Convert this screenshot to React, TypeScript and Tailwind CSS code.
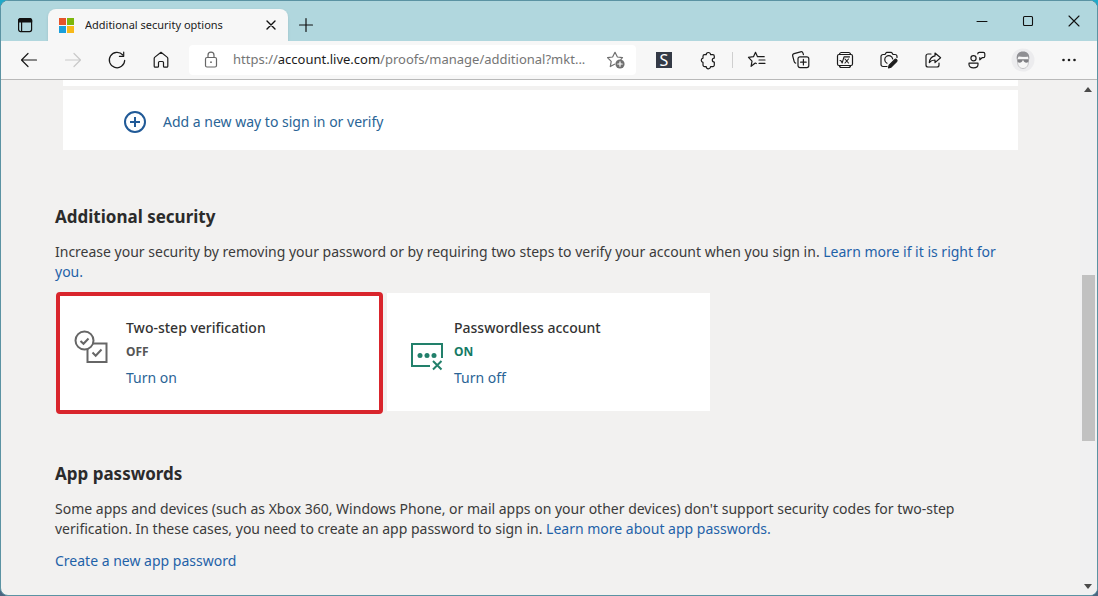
import type { ReactNode } from "react";

type IconButtonProps = { label: string; children: ReactNode; className?: string; disabled?: boolean };

function IconButton({ label, children, className = "text-[#1b1b1b]", disabled }: IconButtonProps) {
  return (
    <button
      type="button"
      aria-label={label}
      disabled={disabled}
      className={`flex h-[30px] w-11 shrink-0 items-center justify-center ${className}`}
    >
      {children}
    </button>
  );
}

function Icon({ children, size = 20, stroke = 1.2 }: { children: ReactNode; size?: number; stroke?: number }) {
  return (
    <svg
      width={size}
      height={size}
      viewBox={`0 0 ${size} ${size}`}
      fill="none"
      stroke="currentColor"
      strokeWidth={stroke}
      strokeLinecap="round"
      strokeLinejoin="round"
      aria-hidden="true"
      className="shrink-0"
    >
      {children}
    </svg>
  );
}

function TitleBar() {
  return (
    <header className="flex h-10 shrink-0 items-stretch bg-[#b1d7de]">
      <button type="button" aria-label="Tab actions menu" className="flex w-[47px] shrink-0 items-center justify-center pt-2 text-[#111]">
        <Icon size={16}>
          <rect x="1.6" y="1.6" width="13" height="13" rx="2" />
          <path d="M1.6 5V3.6a2 2 0 0 1 2-2h9a2 2 0 0 1 2 2V5z" fill="currentColor" />
          <path d="M4.6 5v9.5" stroke="currentColor" />
        </Icon>
      </button>
      <div className="mt-2 flex w-60 items-center rounded-t-lg bg-[#f7f7f7] pr-2 pl-[11px] shadow-sm">
        <svg width="15" height="15" viewBox="0 0 15 15" aria-hidden="true" className="shrink-0">
          <path d="M0 0h7v7H0z" fill="#e5532a" />
          <path d="M8 0h7v7H8z" fill="#7db70c" />
          <path d="M0 8h7v7H0z" fill="#1a9fdb" />
          <path d="M8 8h7v7H8z" fill="#f8b91a" />
        </svg>
        <span className="ml-[11px] flex-1 truncate text-[11px] text-[#222]">Additional security options</span>
        <button type="button" aria-label="Close tab" className="flex size-[18px] items-center justify-center text-[#111]">
          <Icon size={10} stroke={1.4}>
            <path d="M1 1l8 8M9 1L1 9" />
          </Icon>
        </button>
      </div>
      <button type="button" aria-label="New tab" className="flex w-9 shrink-0 items-center justify-center pt-2 text-[#111]">
        <Icon size={16}>
          <path d="M8 1.5v13M1.5 8h13" />
        </Icon>
      </button>
      <div className="ml-auto flex text-[#111]">
        <button type="button" aria-label="Minimize" className="flex w-[46px] items-center justify-center">
          <Icon size={12}>
            <path d="M1 6.5h10" strokeWidth="1" />
          </Icon>
        </button>
        <button type="button" aria-label="Maximize" className="flex w-[46px] items-center justify-center">
          <Icon size={12}>
            <rect x="1.5" y="1.5" width="9" height="9" rx="1" strokeWidth="1.1" />
          </Icon>
        </button>
        <button type="button" aria-label="Close" className="flex w-[46px] items-center justify-center">
          <Icon size={12}>
            <path d="M1 1l10 10M11 1L1 11" strokeWidth="1.1" />
          </Icon>
        </button>
      </div>
    </header>
  );
}

function Toolbar() {
  return (
    <nav aria-label="Browser" className="flex h-[39px] shrink-0 items-center border-b border-[#b9b9b9] bg-[#f7f7f7] px-[6px]">
      <IconButton label="Back">
        <Icon>
          <path d="M17.500 10H2.500M9 3.500L2.500 10L9 16.500" />
        </Icon>
      </IconButton>
      <IconButton label="Forward" disabled className="text-[#c9c9c9]">
        <Icon>
          <path d="M2.500 10h15M11 3.500L17.500 10L11 16.500" />
        </Icon>
      </IconButton>
      <IconButton label="Refresh">
        <Icon>
          <path d="M17.700 10.300A7.700 7.700 0 1 1 15.800 5" />
          <path d="M16.700 2v4.300h-4.300" />
        </Icon>
      </IconButton>
      <IconButton label="Home">
        <Icon>
          <path d="M3.200 8.600a2 2 0 0 1 .7-1.500L10 2.300l6.100 4.800a2 2 0 0 1 .7 1.500v7.600a1 1 0 0 1-1 1h-2.300a1 1 0 0 1-1-1v-3.700a1 1 0 0 0-1-1h-3a1 1 0 0 0-1 1v3.700a1 1 0 0 1-1 1H4.200a1 1 0 0 1-1-1z" />
        </Icon>
      </IconButton>

      <div className="ml-[6px] flex h-[30px] min-w-0 flex-1 items-center rounded bg-white pr-[10px] pl-3">
        <button type="button" aria-label="View site information" className="shrink-0 text-[#666]">
          <Icon>
            <rect x="4.500" y="7.500" width="11" height="9.500" rx="1.500" />
            <path d="M7 7.500V5.200a3 3 0 0 1 6 0v2.300" />
            <circle cx="10" cy="12.200" r=".9" fill="currentColor" stroke="none" />
          </Icon>
        </button>
        <a
          href="https://account.live.com/proofs/manage/additional"
          className="ml-3 min-w-0 flex-1 truncate text-[13px] text-[#757575]"
        >
          https://<span className="text-[#1b1b1b]">account.live.com</span>/proofs/manage/additional?mkt...
        </a>
        <button type="button" aria-label="Add this page to favorites" className="shrink-0 text-[#707070]">
          <Icon>
            <path d="M8.500 14.200L4.300 16.600l.9-5.200L1.500 7.700l5.100-.7L9 2.300l2.400 4.700 5.100.7-1.600 1.600" />
            <circle cx="14" cy="14" r="4.600" fill="currentColor" stroke="none" />
            <path d="M14 11.800v4.400M11.800 14h4.400" stroke="#fff" />
          </Icon>
        </button>
      </div>

      <button type="button" aria-label="S extension" className="ml-[6px] flex h-[30px] w-11 shrink-0 items-center justify-center">
        <span className="flex size-4 items-center justify-center bg-[#343a46] text-base leading-4 text-white">S</span>
      </button>
      <IconButton label="Extensions">
        <Icon>
          <path d="M5 6.200a1.500 1.500 0 0 1 1.500-1.500h1.700a2.200 2.200 0 0 1 4.400 0h2.200a1.500 1.500 0 0 1 1.500 1.500v1.900a2 2 0 1 0 0 4v3a1.500 1.500 0 0 1-1.500 1.500h-2.200a2.200 2.200 0 0 1-4.400 0H6.500A1.500 1.500 0 0 1 5 15.100v-2.700a2.200 2.200 0 0 1 0-4.300z" />
        </Icon>
      </IconButton>
      <div className="mx-[2px] h-4 w-px shrink-0 bg-[#cfcfcf]" />
      <IconButton label="Favorites">
        <Icon>
          <path d="M9.300 13.500L8.300 13l-4.200 3.300.9-5.200L1.500 7.300l5-.6L8.500 2.300l2 4.400h6.700" />
          <path d="M12 10h6M12 13.300h6" />
        </Icon>
      </IconButton>
      <IconButton label="Collections">
        <Icon>
          <path d="M4.700 13.200a2 2 0 0 1-1.500-1.500L1.700 6a2 2 0 0 1 1.400-2.400l6.500-1.800a2 2 0 0 1 2.400 1.300l.4 1.500" />
          <rect x="7" y="6.800" width="10.800" height="10.800" rx="2" />
          <path d="M12.400 9.400v5.600M9.600 12.200h5.600" />
        </Icon>
      </IconButton>
      <IconButton label="Math Solver">
        <Icon>
          <rect x="2.500" y="4.500" width="15" height="11" rx="1.500" />
          <path d="M4.500 4.500a2 2 0 0 1 2-2h7a2 2 0 0 1 2 2M4.500 15.500a2 2 0 0 0 2 2h7a2 2 0 0 0 2-2" />
          <path d="M5 10.500l1 .2 1.200 2.200 1.800-6h5.500M10 9l3.500 4M13.500 9L10 13" strokeWidth="1.100" />
        </Icon>
      </IconButton>
      <IconButton label="Web capture">
        <Icon>
          <path d="M8 16.500H4a2 2 0 0 1-2-2V6.500a2 2 0 0 1 2-2h2l1-1.600a1 1 0 0 1 .9-.5h4.200a1 1 0 0 1 .9.500L14 4.500h2a2 2 0 0 1 2 2v1" />
          <path d="M8 13.200A4 4 0 1 1 13.700 9" />
          <path d="M9.500 17.800l.7-2.600 5.500-5.500a1.300 1.300 0 0 1 1.900 1.900l-5.500 5.500z" fill="currentColor" />
        </Icon>
      </IconButton>
      <IconButton label="Share">
        <Icon>
          <path d="M8 4H5a2 2 0 0 0-2 2v9a2 2 0 0 0 2 2h9a2 2 0 0 0 2-2v-2" />
          <path d="M12 3l5.600 4.800L12 12.600V10c-2.600 0-4.300.8-5.700 2.600.4-3.500 2.300-6.200 5.700-6.700z" />
        </Icon>
      </IconButton>
      <IconButton label="Send feedback">
        <Icon>
          <circle cx="6.500" cy="8.300" r="2.600" />
          <path d="M2 13.200h9v1.300c0 2-1.800 3.300-4.500 3.300S2 16.500 2 14.500z" />
          <path d="M10.800 3.800a1.500 1.500 0 0 1 1.500-1.500h4a1.500 1.500 0 0 1 1.500 1.500v2.400a1.500 1.500 0 0 1-1.500 1.500h-1.200L12.800 9.800V7.700" />
        </Icon>
      </IconButton>
      <button type="button" aria-label="Profile" className="mx-[2px] flex h-[30px] w-11 shrink-0 items-center justify-center">
        <svg width="24" height="24" viewBox="0 0 24 24" aria-hidden="true">
          <circle cx="12" cy="12" r="11.500" fill="#ececee" />
          <path d="M6.500 8.500h11v5.500c0 3.400-2 6.500-5.500 6.500s-5.500-3.100-5.500-6.500z" fill="#f6f6f6" stroke="#bdbdc0" strokeWidth=".9" />
          <path d="M5.800 11.500C5 6 8 3.500 12 3.500s7 2.500 6.200 8c-.5-1.200-.9-2.200-1.300-3.200-2.600.9-6.600.6-9.100-.5-.4 1.400-1.100 2.500-2 3.700z" fill="#8f8f93" />
          <path d="M6.400 11.200h11.200v1.500c0 1.200-.9 2-2.200 2-1.600 0-2.600-.8-2.800-2.100h-1.200c-.2 1.300-1.200 2.100-2.800 2.100-1.300 0-2.200-.8-2.200-2z" fill="#808084" />
        </svg>
      </button>
      <IconButton label="Settings and more">
        <Icon>
          <circle cx="4.500" cy="10" r="1.300" fill="currentColor" stroke="none" />
          <circle cx="10" cy="10" r="1.300" fill="currentColor" stroke="none" />
          <circle cx="15.500" cy="10" r="1.300" fill="currentColor" stroke="none" />
        </Icon>
      </IconButton>
    </nav>
  );
}

type StatusCardProps = {
  title: string;
  status: string;
  statusClass: string;
  action: string;
  icon: ReactNode;
  className: string;
};

function StatusCard({ title, status, statusClass, action, icon, className }: StatusCardProps) {
  return (
    <article className={`flex bg-white ${className}`}>
      {icon}
      <div>
        <h3 className="leading-5 font-medium text-[#333]">{title}</h3>
        <p className={`mt-1 text-xs leading-5 font-bold ${statusClass}`}>{status}</p>
        <a href="#" className="mt-[6px] block leading-5 text-[#2a6496]">
          {action}
        </a>
      </div>
    </article>
  );
}

function Content() {
  return (
    <main className="min-w-0 flex-1 overflow-hidden pr-[62px] pl-[54px] text-sm leading-5 text-[#3b3b3b]">
      <div className="ml-2 h-[6px] bg-white" />
      <div className="mt-1 ml-2 flex h-[60px] items-center bg-white pt-[3px] pl-[60px]">
        <a href="#" className="flex items-center gap-4 text-[#2a6496]">
          <svg width="24" height="24" viewBox="0 0 24 24" fill="none" stroke="#215a97" strokeWidth="2" aria-hidden="true">
            <circle cx="12" cy="12" r="10" />
            <path d="M12 7v10M7 12h10" />
          </svg>
          Add a new way to sign in or verify
        </a>
      </div>

      <section className="mt-[55px]">
        <h2 className="text-[17px] leading-6 font-bold text-[#2b2b2b]">Additional security</h2>
        <p className="mt-[13px]">
          Increase your security by removing your password or by requiring two steps to verify your account when you
          sign in.{" "}
          <a href="#" className="text-[#1f62a8]">
            Learn more if it is right for you.
          </a>
        </p>
        <div className="mt-[10px] flex items-start gap-1 pl-px">
          <StatusCard
            title="Two-step verification"
            status="OFF"
            statusClass="text-[#555]"
            action="Turn on"
            className="h-[122px] w-[327px] gap-[18px] rounded-sm border-4 border-[#d9252c] pt-[22px] pl-[14px]"
            icon={
              <svg width="34" height="34" viewBox="0 0 34 34" fill="none" stroke="#666" strokeWidth="2" aria-hidden="true" className="mt-3 shrink-0">
                <path d="M13 19V13.500h19.500v18.500H13.500V19" />
                <circle cx="10.500" cy="10.500" r="9" fill="#fff" />
                <path d="M6.500 11l3 2.800 5-5.300M18.500 22.500l3.200 3.200 5.800-6.200" />
              </svg>
            }
          />
          <StatusCard
            title="Passwordless account"
            status="ON"
            statusClass="text-[#147a64]"
            action="Turn off"
            className="mt-px h-[118px] w-[323px] gap-[10px] pt-[25px] pl-6"
            icon={
              <svg width="33" height="29" viewBox="0 0 33 29" fill="none" stroke="#22806b" strokeWidth="2" aria-hidden="true" className="mt-6 shrink-0">
                <path d="M19 24H1V2h30v14" />
                <path d="M22 19l8.500 8.500M30.500 19L22 27.500" />
                <g fill="#22806b" stroke="none">
                  <circle cx="9" cy="13.500" r="2.500" />
                  <circle cx="16" cy="13.500" r="2.500" />
                  <circle cx="23" cy="13.500" r="2.500" />
                </g>
              </svg>
            }
          />
        </div>
      </section>

      <section className="mt-12">
        <h2 className="text-[17px] leading-6 font-bold text-[#2b2b2b]">App passwords</h2>
        <p className="mt-[13px]">
          Some apps and devices (such as Xbox 360, Windows Phone, or mail apps on your other devices) don't support
          security codes for two-step verification. In these cases, you need to create an app password to sign in.{" "}
          <a href="#" className="text-[#1f62a8]">
            Learn more about app passwords.
          </a>
        </p>
        <a href="#" className="mt-3 block text-[#1f62a8]">
          Create a new app password
        </a>
      </section>
    </main>
  );
}

function ScrollBar() {
  return (
    <div className="flex w-[17px] shrink-0 flex-col items-center bg-[#f0f0f1] pr-px text-[#4a4a4a]">
      <button type="button" aria-label="Scroll up" className="flex h-[18px] w-full items-center justify-center">
        <svg width="8" height="5" viewBox="0 0 8 5" aria-hidden="true">
          <path d="M0 5l4-5 4 5z" fill="currentColor" />
        </svg>
      </button>
      <div className="grow-[177]" />
      <div className="w-[13px] grow-[166] bg-[#c1c1c1]" />
      <div className="grow-[136]" />
      <button type="button" aria-label="Scroll down" className="flex h-[18px] w-full items-center justify-center">
        <svg width="8" height="5" viewBox="0 0 8 5" aria-hidden="true">
          <path d="M0 0l4 5 4-5z" fill="currentColor" />
        </svg>
      </button>
    </div>
  );
}

export default function App() {
  return (
    <div className="h-screen bg-linear-to-b from-[#1fa9c9] to-[#4a6580] font-['Noto_Sans',sans-serif]">
      <div className="flex h-full flex-col overflow-hidden rounded-lg border border-[#5b93a3] bg-[#f2f1f0]">
        <TitleBar />
        <Toolbar />
        <div className="flex min-h-0 flex-1">
          <Content />
          <ScrollBar />
        </div>
      </div>
    </div>
  );
}
